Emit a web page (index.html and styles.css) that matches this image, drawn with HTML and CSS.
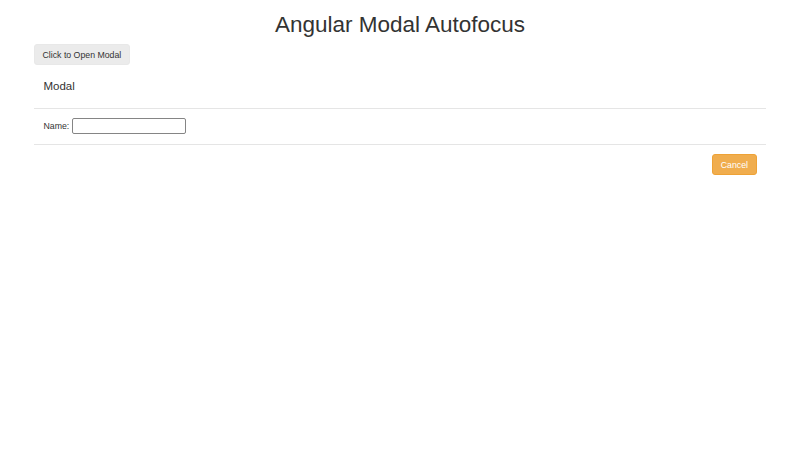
FILE: index.html
```html
<!DOCTYPE html>
<html lang="en">
<head>
<meta charset="utf-8">
<title>Angular Modal Autofocus</title>
<link rel="stylesheet" href="styles.css">
</head>
<body>
  <h1 class="page-title">Angular Modal Autofocus</h1>
  <div class="container">
    <button class="btn btn-open" type="button">Click to Open Modal</button>
    <div class="modal">
      <div class="modal-header">
        <h3 class="modal-title">Modal</h3>
      </div>
      <div class="modal-body">
        <label class="field-label" for="name">Name:</label>
        <input class="field-input" id="name" type="text">
      </div>
      <div class="modal-footer">
        <button class="btn btn-cancel" type="button">Cancel</button>
      </div>
    </div>
  </div>
</body>
</html>
```
FILE: styles.css
```css
html, body {
  margin: 0;
  padding: 0;
  background: #fff;
}

body {
  font-family: "Liberation Sans", Helvetica, Arial, sans-serif;
  color: #333;
}

.page-title {
  margin: 12px 0 6px;
  font-size: 22.5px;
  line-height: 26px;
  font-weight: normal;
  text-align: center;
  color: #333;
}

.container {
  padding: 0 34px;
}

.btn {
  display: inline-block;
  font-family: inherit;
  cursor: pointer;
  border-radius: 3px;
  margin: 0;
}

.btn-open {
  display: block;
  height: 21px;
  padding: 0 7.5px;
  font-size: 8.75px;
  color: #333;
  background: #ebebeb;
  border: 1px solid #e8e8e8;
}

.modal-header {
  padding: 12px 9.5px 13px;
  border-bottom: 1px solid #e5e5e5;
}

.modal-title {
  margin: 0;
  font-size: 11.5px;
  line-height: 18px;
  font-weight: normal;
  color: #333;
}

.modal-body {
  display: flex;
  align-items: center;
  gap: 3px;
  padding: 9px 9.5px 10px;
  border-bottom: 1px solid #e5e5e5;
}

.field-label {
  font-size: 8.75px;
  color: #333;
}

.field-input {
  box-sizing: border-box;
  width: 114px;
  height: 16px;
  margin: 0;
  padding: 0 2px;
  border: 1px solid #858585;
  border-radius: 2px;
  font-size: 8.75px;
}

.modal-footer {
  display: flex;
  justify-content: flex-end;
  padding: 9px 9.5px 8px;
}

.btn-cancel {
  height: 21px;
  padding: 0 7.5px;
  font-size: 8.75px;
  color: #fff;
  background: #f0ad4e;
  border: 1px solid #eea236;
}
```
